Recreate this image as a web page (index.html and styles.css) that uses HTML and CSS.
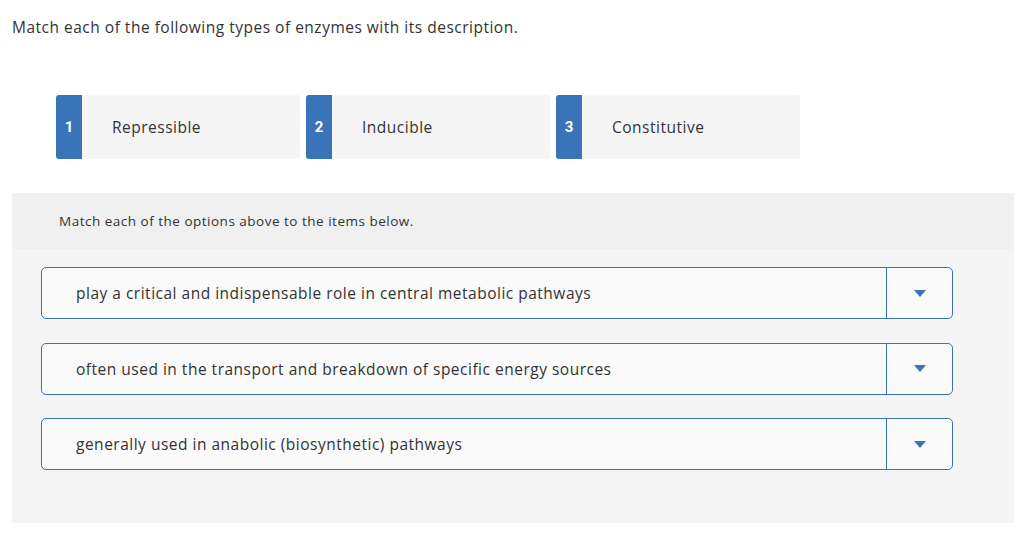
FILE: index.html
```html
<!DOCTYPE html>
<html>
<head>
<meta charset="utf-8">
<link rel="stylesheet" href="styles.css">
</head>
<body>
<div class="page">
  <p class="prompt">Match each of the following types of enzymes with its description.</p>
  <div class="choices">
    <div class="choice"><span class="num">1</span><span class="label">Repressible</span></div>
    <div class="choice"><span class="num">2</span><span class="label">Inducible</span></div>
    <div class="choice"><span class="num">3</span><span class="label">Constitutive</span></div>
  </div>
  <div class="panel">
    <div class="panel-head">Match each of the options above to the items below.</div>
    <div class="panel-body">
      <div class="select">
        <span class="select-text">play a critical and indispensable role in central metabolic pathways</span>
        <span class="select-btn"><svg width="12" height="7" viewBox="0 0 12 7"><path d="M0 0H12L6 7Z" fill="#3a74b8"/></svg></span>
      </div>
      <div class="select">
        <span class="select-text">often used in the transport and breakdown of specific energy sources</span>
        <span class="select-btn"><svg width="12" height="7" viewBox="0 0 12 7"><path d="M0 0H12L6 7Z" fill="#3a74b8"/></svg></span>
      </div>
      <div class="select">
        <span class="select-text">generally used in anabolic (biosynthetic) pathways</span>
        <span class="select-btn"><svg width="12" height="7" viewBox="0 0 12 7"><path d="M0 0H12L6 7Z" fill="#3a74b8"/></svg></span>
      </div>
    </div>
  </div>
</div>
</body>
</html>
```
FILE: styles.css
```css
html, body {
  margin: 0;
  padding: 0;
  background: #ffffff;
}
body {
  font-family: "Open Sans", Lato, sans-serif;
  color: #333333;
  letter-spacing: 0.5px;
}
.page {
  padding: 0 10px 0 12px;
}
.prompt {
  margin: 0;
  padding-top: 17px;
  height: 20px;
  line-height: 20px;
  font-size: 15.5px;
}
.choices {
  display: flex;
  gap: 6px;
  margin: 58px 0 0 44px;
}
.choice {
  width: 244px;
  height: 64px;
  display: flex;
  align-items: center;
  background: #f5f5f5;
  border-radius: 3px;
  overflow: hidden;
}
.num {
  width: 26px;
  height: 100%;
  background: #3a74b8;
  color: #ffffff;
  font-family: Roboto, "Open Sans", sans-serif;
  font-weight: 700;
  font-size: 15px;
  letter-spacing: 0;
  display: flex;
  align-items: center;
  justify-content: center;
}
.label {
  margin-left: 30px;
  font-size: 15.5px;
}
.panel {
  margin-top: 34px;
  width: 1002px;
  background: #f5f5f5;
  border-radius: 3px 3px 0 0;
}
.panel-head {
  height: 56px;
  display: flex;
  align-items: center;
  padding-left: 47px;
  background: #f0f0f0;
  font-size: 13.5px;
  border-radius: 3px 3px 0 0;
}
.panel-body {
  padding: 18px 61px 53px 29px;
  display: flex;
  flex-direction: column;
  gap: 23.5px;
}
.select {
  height: 50px;
  border: 1px solid #3a74b8;
  border-radius: 5px;
  background: #fafafa;
  display: flex;
  align-items: center;
}
.select-text {
  flex: 1;
  padding-left: 34px;
  font-size: 15.5px;
}
.select-btn {
  width: 65px;
  height: 100%;
  border-left: 1px solid #3a74b8;
  display: flex;
  align-items: center;
  justify-content: center;
}
.select-btn svg {
  display: block;
}
```
